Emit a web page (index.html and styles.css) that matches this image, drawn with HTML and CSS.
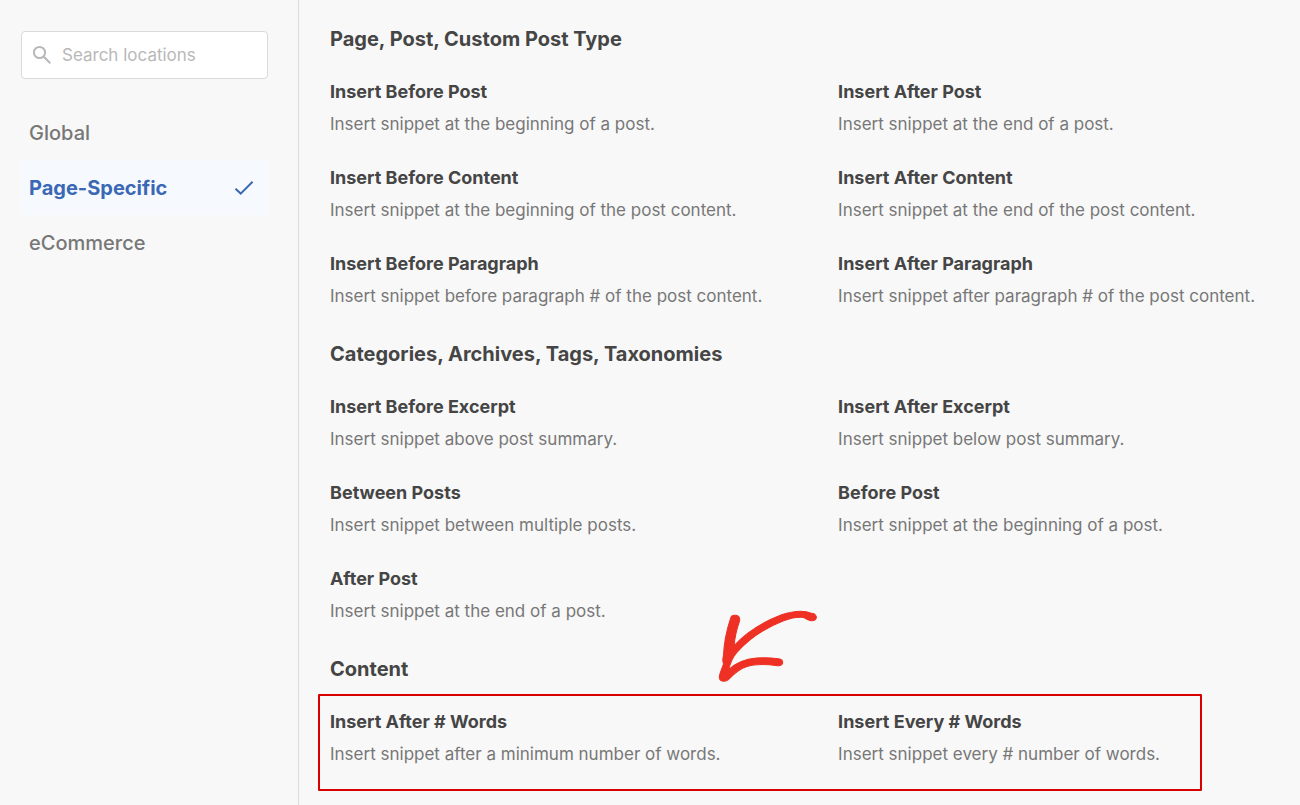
FILE: index.html
```
<!DOCTYPE html>
<html lang="en">
<head>
    <meta charset="UTF-8">
    <meta name="viewport" content="width=device-width, initial-scale=1.0">
    <title>Snippet Locations</title>
    <link rel="stylesheet" href="styles.css">
</head>
<body>
    <div class="locations">
        <aside class="sidebar">
            <div class="search">
                <svg class="search-icon" viewBox="0 0 20 20" aria-hidden="true">
                    <circle cx="7.5" cy="7.5" r="5.6"/>
                    <path d="M11.8 11.8L18.3 18.3"/>
                </svg>
                <input type="search" class="search-input" aria-label="Search locations" placeholder="Search locations">
            </div>
            <nav class="menu">
                <button type="button" class="menu-item">Global</button>
                <button type="button" class="menu-item active">
                    Page-Specific
                    <svg class="check-icon" viewBox="0 0 20 16" aria-hidden="true">
                        <path d="M1.5 8.7L6.7 13.6L18.6 1.7"/>
                    </svg>
                </button>
                <button type="button" class="menu-item">eCommerce</button>
            </nav>
        </aside>

        <main class="content">
            <section class="group">
                <h2>Page, Post, Custom Post Type</h2>
                <div class="grid">
                    <div class="location">
                        <h3>Insert Before Post</h3>
                        <p>Insert snippet at the beginning of a post.</p>
                    </div>
                    <div class="location">
                        <h3>Insert After Post</h3>
                        <p>Insert snippet at the end of a post.</p>
                    </div>
                    <div class="location">
                        <h3>Insert Before Content</h3>
                        <p>Insert snippet at the beginning of the post content.</p>
                    </div>
                    <div class="location">
                        <h3>Insert After Content</h3>
                        <p>Insert snippet at the end of the post content.</p>
                    </div>
                    <div class="location">
                        <h3>Insert Before Paragraph</h3>
                        <p>Insert snippet before paragraph # of the post content.</p>
                    </div>
                    <div class="location">
                        <h3>Insert After Paragraph</h3>
                        <p>Insert snippet after paragraph # of the post content.</p>
                    </div>
                </div>
            </section>

            <section class="group">
                <h2>Categories, Archives, Tags, Taxonomies</h2>
                <div class="grid">
                    <div class="location">
                        <h3>Insert Before Excerpt</h3>
                        <p>Insert snippet above post summary.</p>
                    </div>
                    <div class="location">
                        <h3>Insert After Excerpt</h3>
                        <p>Insert snippet below post summary.</p>
                    </div>
                    <div class="location">
                        <h3>Between Posts</h3>
                        <p>Insert snippet between multiple posts.</p>
                    </div>
                    <div class="location">
                        <h3>Before Post</h3>
                        <p>Insert snippet at the beginning of a post.</p>
                    </div>
                    <div class="location">
                        <h3>After Post</h3>
                        <p>Insert snippet at the end of a post.</p>
                    </div>
                </div>
            </section>

            <section class="group">
                <h2>Content</h2>
                <div class="grid highlighted">
                    <div class="location">
                        <h3>Insert After # Words</h3>
                        <p>Insert snippet after a minimum number of words.</p>
                    </div>
                    <div class="location">
                        <h3>Insert Every # Words</h3>
                        <p>Insert snippet every # number of words.</p>
                    </div>
                    <svg class="arrow" viewBox="0 0 100 72" aria-hidden="true">
                        <path class="arrow-fill" d="M11.5 8C12.500 3.500 21 4 20.500 10C17.500 19 15.500 27 15 35C28 21 45 11 62 4.500C74 .5 84 -.2 92 3.200C98.500 4 97.500 11.500 91 10.500C88 10 86 8.500 84 7.300C77 6.500 71 8 64 10.500C47 17 30 28 17.500 42C13 47 11 53 9.500 59C17 52 26 48.500 37 47.500C44 47 52 47.300 59 48.200C65 49.200 64 56 58 55C47 53.500 36 53 27 56C20 58 15 63 10 68C6.500 72 -1 71 .5 65C1 61 3.500 57 4.500 53C3 50 4 48 4.500 44C5 32 7.500 20 11.500 8Z"/>
                    </svg>
                </div>
            </section>
        </main>
    </div>
</body>
</html>
```
FILE: styles.css
```
* {
    box-sizing: border-box;
}

body {
    margin: 0;
    background: #f8f8f8;
    color: #454545;
    font-family: Inter, "Liberation Sans", sans-serif;
}

.locations {
    display: flex;
    min-height: 100vh;
}

/* Sidebar */
.sidebar {
    flex: 0 0 299px;
    min-width: 0;
    padding: 31px 30px 20px 21px;
    border-right: 1px solid #dcdcdc;
}

.search {
    display: flex;
    align-items: center;
    gap: 10px;
    height: 48px;
    padding: 0 10px;
    background: #fff;
    border: 1px solid #dadada;
    border-radius: 4px;
}

.search-icon {
    flex: none;
    width: 20px;
    height: 20px;
    fill: none;
    stroke: #b8b8b8;
    stroke-width: 2;
}

.search-input {
    flex: 1;
    min-width: 0;
    padding: 0;
    border: none;
    outline: none;
    background: transparent;
    color: #454545;
    font-family: inherit;
    font-size: 17px;
}

.search-input::placeholder {
    color: #b8b8b8;
}

.menu {
    display: flex;
    flex-direction: column;
    margin-top: 26px;
}

.menu-item {
    display: flex;
    align-items: center;
    justify-content: space-between;
    height: 55px;
    padding: 0 14px 0 8px;
    border: none;
    background: transparent;
    color: #777;
    font-family: inherit;
    font-size: 20px;
    font-weight: 500;
    text-align: left;
    cursor: pointer;
}

.menu-item.active {
    background: #f6faff;
    color: #3b68b5;
    font-weight: 700;
}

.check-icon {
    width: 20px;
    height: 16px;
    fill: none;
    stroke: #3b68b5;
    stroke-width: 2;
}

/* Location list */
.content {
    flex: 1;
    min-width: 0;
    padding: 25px 0 0 31px;
}

.group {
    margin-bottom: 32px;
}

.group:last-child {
    margin-bottom: 0;
}

h2,
h3,
p {
    margin: 0;
}

h2 {
    margin-bottom: 27px;
    font-size: 20px;
    font-weight: 700;
    line-height: 28px;
}

.grid {
    display: grid;
    grid-template-columns: 11fr 10fr;
    row-gap: 30px;
}

h3 {
    margin-bottom: 8px;
    font-size: 18px;
    font-weight: 700;
    line-height: 24px;
}

p {
    color: #777;
    font-size: 17px;
    line-height: 24px;
}

/* Red frame and arrow drawn over the last group */
.highlighted {
    position: relative;
}

.highlighted::after {
    content: "";
    position: absolute;
    inset: -16px 98px -25px -12px;
    border: 2px solid #d90000;
    border-radius: 1px;
}

.arrow {
    position: absolute;
    bottom: 83px;
    left: 389px;
    width: 101px;
    height: 73px;
    overflow: visible;
}

.arrow-fill {
    fill: #ee3124;
    stroke: #ee3124;
    stroke-width: 1;
    stroke-linejoin: round;
}
```
